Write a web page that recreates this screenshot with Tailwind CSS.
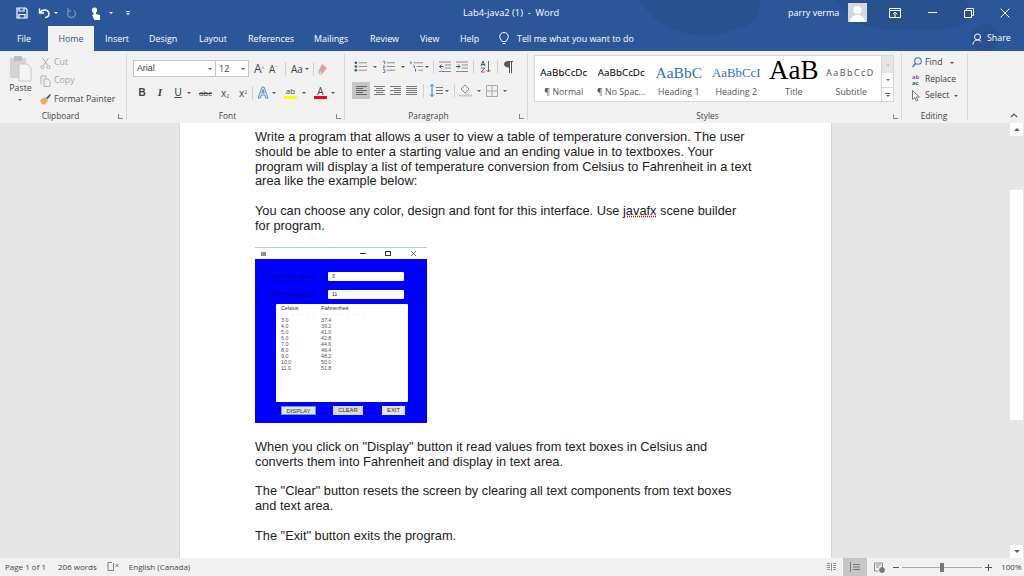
<!doctype html>
<html><head><meta charset="utf-8"><script src="https://cdn.jsdelivr.net/npm/@tailwindcss/browser@4"></script></head>
<body class="m-0">
<div class="w-[1024px] h-[576px] overflow-hidden flex flex-col bg-[#e6e6e6] font-['Open_Sans',sans-serif] text-[#444]">
  <!-- header -->
  <div class="relative w-[1024px] h-[51px] shrink-0 bg-[#2b579a] flex flex-col text-white text-[9px]">
    <svg class="absolute left-[640px] top-0 w-[384px] h-[51px]" viewBox="0 0 384 51" fill="#28528f"><path d="M0 0h120c0 12 -4 24 -20 28 -18 6 -34 12 -50 6C30 30 10 20 0 0Z"/><path d="M195 0h130c10 10 6 24 -12 28 -30 4 -70 6 -100 -6Z"/><circle cx="345" cy="38" r="14"/></svg>
    <div class="h-[26px] flex items-center relative">
      <svg class="ml-[16px] w-[12px] h-[12px]" viewBox="0 0 12 12" fill="none" stroke="#fff" stroke-width="1.2"><path d="M1 1h8.500L11 2.500V11H1Z"/><path d="M3 1v3h5V1M3 11V7.500h6V11"/></svg>
      <svg class="ml-[10px] w-[13px] h-[12px]" viewBox="0 0 13 12" fill="none" stroke="#fff" stroke-width="1.600"><path d="M2 5.500C4 2.500 9 2 10.500 5S10 10.500 7 10.500"/><path d="M1.500 1.500V6H6" stroke-width="1.400"/></svg>
      <span class="ml-[3px] w-0 h-0 border-x-[2px] border-x-transparent border-t-[2px] border-t-white"></span>
      <svg class="ml-[8px] w-[11px] h-[12px]" viewBox="0 0 11 12" fill="none" stroke="#6a8abb" stroke-width="1.500"><path d="M3 3.500A4 4 0 1 0 8 3.500"/><path d="M2 1v3h3"/></svg>
      <svg class="ml-[14px] w-[10px] h-[13px]" viewBox="0 0 10 13" fill="#fff"><circle cx="3.500" cy="3" r="2.600"/><path d="M2 4h3v3l4 1v5H3.500L1 8h1.500Z"/></svg>
      <span class="ml-[8px] w-0 h-0 border-x-[2px] border-x-transparent border-t-[2px] border-t-white"></span>
      <span class="ml-[13px] flex flex-col items-center gap-[1px]"><span class="w-[4px] h-px bg-white"></span><span class="w-0 h-0 border-x-[2px] border-x-transparent border-t-[2px] border-t-white"></span></span>
      <span class="absolute left-[463px] top-[6px] text-[9.300px] leading-[13px]">Lab4-java2 (1)&nbsp; -&nbsp; Word</span>
      <span class="absolute left-[788px] top-[6px] text-[9px] leading-[13px]">parry verma</span>
      <span class="absolute left-[848px] top-[3px] w-[19px] h-[19px] bg-[#d8d8d8] overflow-hidden"><svg viewBox="0 0 19 19" class="w-full h-full" fill="#fff"><circle cx="9.500" cy="7" r="4"/><path d="M2 19c0-5 4-7 7.500-7s7.500 2 7.500 7Z"/></svg></span>
      <svg class="absolute left-[889px] top-[8px] w-[12px] h-[10px]" viewBox="0 0 12 10" fill="none" stroke="#fff"><path d="M.5.500h11v9H.5ZM.5 2.500h11M6 9V4M4 6l2-2 2 2"/></svg>
      <span class="absolute left-[928px] top-[12px] w-[9px] h-px bg-white"></span>
      <svg class="absolute left-[964px] top-[8px] w-[10px] h-[10px]" viewBox="0 0 10 10" fill="none" stroke="#fff"><path d="M.5 2.500h7v7h-7ZM2.500 2.500v-2h7v7h-2"/></svg>
      <svg class="absolute left-[1000px] top-[8px] w-[10px] h-[10px]" viewBox="0 0 10 10" fill="none" stroke="#fff"><path d="M.5.500l9 9M9.500.500l-9 9"/></svg>
    </div>
    <div class="h-[25px] flex items-center relative text-[8.900px]">
      <span class="w-[48px] pl-[17px]">File</span>
      <span class="w-[46px] h-[25px] bg-[#f1f1f1] text-[#2b579a] text-center leading-[25px]">Home</span>
      <span class="ml-[11px] w-[44px]">Insert</span>
      <span class="w-[50px]">Design</span>
      <span class="w-[49px]">Layout</span>
      <span class="w-[66px]">References</span>
      <span class="w-[56px]">Mailings</span>
      <span class="w-[50px]">Review</span>
      <span class="w-[40px]">View</span>
      <span class="w-[39px]">Help</span>
      <svg class="w-[10px] h-[13px]" viewBox="0 0 10 13" fill="none" stroke="#fff"><path d="M3 9.500C2 7.500 .7 6.500 .7 4.500a4.300 4 0 0 1 8.600 0C9.300 6.500 8 7.500 7 9.500ZM3.500 11.500h3"/></svg>
      <span class="ml-[8px]">Tell me what you want to do</span>
      <svg class="absolute left-[972px] top-[7px] w-[11px] h-[12px]" viewBox="0 0 11 12" fill="none" stroke="#fff"><circle cx="5.500" cy="4" r="3"/><path d="M1 11.500c0-3 2-4.500 4.500-4.500 1.500 0 2.500.5 3.500 1.500"/></svg>
      <span class="absolute left-[987px] top-[5px]">Share</span>
    </div>
  </div>
  <!-- ribbon -->
  <div class="h-[72px] bg-[#f1f1f1] flex shrink-0 text-[8.800px] relative">
    <!-- clipboard -->
    <div class="w-[127px] h-[67px] mt-[2px] border-r border-[#d8d8d8] flex flex-col shrink-0">
      <div class="h-[57px] flex">
        <div class="w-[40px] flex flex-col items-center pt-[3px]">
          <svg class="w-[23px] h-[26px]" viewBox="0 0 23 26"><rect x="1" y="2" width="16" height="20" fill="#d4d4d4"/><rect x="5" y="0" width="8" height="5" fill="#bdbdbd"/><path d="M10 8h8l4 4v13H10Z" fill="#f4f4f4" stroke="#c8c8c8"/></svg>
          <span class="leading-[11px] mt-[1px] ml-[1px] text-[#444]">Paste</span>
          <span class="w-0 h-0 mt-[5px] border-x-[2px] border-x-transparent border-t-[2px] border-t-[#666]"></span>
        </div>
        <div class="flex flex-col pt-[1px] text-[#444] gap-[1.500px]">
          <div class="h-[17px] flex items-center gap-[3px] text-[#a6a6a6]"><svg class="w-[11px] h-[12px]" viewBox="0 0 11 12" fill="none" stroke="#b0b0b0"><path d="M2.500 1l5 7M8.500 1l-5 7"/><circle cx="2.500" cy="10" r="1.500"/><circle cx="8.500" cy="10" r="1.500"/></svg>Cut</div>
          <div class="h-[17px] flex items-center gap-[3px] text-[#a6a6a6]"><svg class="w-[11px] h-[12px]" viewBox="0 0 11 12" fill="none" stroke="#b0b0b0"><path d="M1 9V1h5v2M4 4h4l2 2v5.500H4Z"/></svg>Copy</div>
          <div class="h-[17px] flex items-center gap-[3px]"><svg class="w-[11px] h-[11px]" viewBox="0 0 11 11"><path d="M0 6l5-3 3 4-3 3.500H2Z" fill="#e4b060"/><path d="M6 4l4-4 1 1-3.500 4.500Z" fill="#555"/></svg>Format Painter</div>
        </div>
      </div>
      <div class="h-[10px] relative text-center pr-[5px] text-[8.300px] leading-[12px]">Clipboard<span class="absolute right-[3px] top-[4px] w-[5px] h-[5px] border-l border-b border-[#888]"></span></div>
    </div>
    <!-- font -->
    <div class="w-[218px] h-[67px] mt-[2px] border-r border-[#d8d8d8] flex flex-col shrink-0 pl-[6px]">
      <div class="h-[57px] flex flex-col">
        <div class="h-[17px] mt-[7px] flex items-center">
          <div class="w-[83px] h-[17px] bg-white border border-[#c6c6c6] flex items-center justify-between px-[3px] font-['Liberation_Sans',sans-serif] text-[8.800px]">Arial<span class="w-0 h-0 border-x-[2px] border-x-transparent border-t-[2px] border-t-[#555]"></span></div>
          <div class="w-[34px] h-[17px] -ml-px bg-white border border-[#c6c6c6] flex items-center justify-between px-[3px] text-[9px]">12<span class="w-0 h-0 border-x-[2px] border-x-transparent border-t-[2px] border-t-[#555]"></span></div>
          <span class="ml-[5px] text-[12px] leading-none w-[15px]">A<sup class="text-[5px] text-[#2b579a]">^</sup></span>
          <span class="text-[10px] leading-none w-[14px]">A<sup class="text-[5px] text-[#2b579a]">ˇ</sup></span>
          <span class="w-px h-[14px] bg-[#d0d0d0] ml-[2px]"></span>
          <span class="ml-[5px] text-[10px] leading-none">Aa</span><span class="ml-[2px] w-0 h-0 border-x-[2px] border-x-transparent border-t-[2px] border-t-[#555]"></span>
          <span class="w-px h-[14px] bg-[#d0d0d0] ml-[4px]"></span>
          <svg class="ml-[3px] w-[12px] h-[12px]" viewBox="0 0 12 12"><path d="M5 1l5 4-4 5-4-3Z" fill="#e79aa4"/><path d="M2 7l4 3-1 1H2Z" fill="#ddd" stroke="#999" stroke-width=".5"/></svg>
        </div>
        <div class="h-[17px] mt-[7px] flex items-center text-[#444]">
          <span class="w-[18px] text-center font-bold font-['Liberation_Sans',sans-serif] text-[10px]">B</span>
          <span class="w-[18px] text-center italic font-['Liberation_Serif',serif] font-bold text-[11px]">I</span>
          <span class="w-[18px] text-center underline font-['Liberation_Sans',sans-serif] text-[10px]">U</span>
          <span class="w-0 h-0 border-x-[2px] border-x-transparent border-t-[2px] border-t-[#555]"></span>
          <span class="ml-[6px] w-[17px] text-center line-through text-[8px]">abc</span>
          <span class="ml-[4px] w-[14px] text-center text-[10px] leading-none">x<sub class="text-[5px] text-[#2b579a]">2</sub></span>
          <span class="ml-[4px] w-[14px] text-center text-[10px] leading-none">x<sup class="text-[5px] text-[#2b579a]">2</sup></span>
          <span class="w-px h-[14px] bg-[#d0d0d0] ml-[2px]"></span>
          <svg class="ml-[4px] w-[12px] h-[13px]" viewBox="0 0 12 13" fill="#dbe8f7" stroke="#5b8fd0"><path d="M1 12L5 1h2l4 11H8.500L7.700 9H4.300L3.500 12ZM4.800 7h2.400L6 3.500Z"/></svg>
          <span class="ml-[3px] w-0 h-0 border-x-[2px] border-x-transparent border-t-[2px] border-t-[#555]"></span>
          <div class="ml-[8px] w-[13px] flex flex-col items-center text-[8px] leading-[10px]"><span>ab</span><span class="w-[13px] h-[3px] bg-[#ffff00]"></span></div>
          <span class="ml-[5px] w-0 h-0 border-x-[2px] border-x-transparent border-t-[2px] border-t-[#555]"></span>
          <div class="ml-[8px] w-[13px] flex flex-col items-center text-[10px] leading-[10px]"><span>A</span><span class="w-[13px] h-[3px] bg-[#ff0000]"></span></div>
          <span class="ml-[4px] w-0 h-0 border-x-[2px] border-x-transparent border-t-[2px] border-t-[#555]"></span>
        </div>
      </div>
      <div class="h-[10px] relative text-center pr-[22px] text-[8.300px] leading-[12px]">Font<span class="absolute right-[3px] top-[4px] w-[5px] h-[5px] border-l border-b border-[#888]"></span></div>
    </div>
    <!-- paragraph -->
    <div class="w-[183px] h-[67px] mt-[2px] border-r border-[#d8d8d8] flex flex-col shrink-0 pl-[7px]">
      <div class="h-[57px] flex flex-col">
        <div class="h-[17px] mt-[5px] flex items-center">
          <svg class="ml-[2px] w-[13px] h-[13px]" viewBox="0 0 14 13" stroke="#8a8a8a"><path d="M5 2.500h9M5 6.500h9M5 10.500h9"/><g fill="#2b579a" stroke="none"><circle cx="2" cy="2.500" r="1.400"/><circle cx="2" cy="6.500" r="1.400"/><circle cx="2" cy="10.500" r="1.400"/></g></svg>
          <span class="ml-[6px] w-0 h-0 border-x-[2px] border-x-transparent border-t-[2px] border-t-[#555]"></span>
          <svg class="ml-[5px] w-[13px] h-[13px]" viewBox="0 0 14 13" stroke="#8a8a8a"><path d="M5 2.500h9M5 6.500h9M5 10.500h9"/><path d="M1 1h2v3M1 6h2l-2 2h2M1 10h2v3H1" stroke="#2b579a" fill="none" stroke-width=".8"/></svg>
          <span class="ml-[6px] w-0 h-0 border-x-[2px] border-x-transparent border-t-[2px] border-t-[#555]"></span>
          <svg class="ml-[5px] w-[13px] h-[13px]" viewBox="0 0 14 13" stroke="#8a8a8a"><path d="M4 2.500h10M7 6.500h7M9 10.500h5"/><path d="M1 1v3M4 5l1 3M6 9v3" stroke="#2b579a"/></svg>
          <span class="ml-[2px] w-0 h-0 border-x-[2px] border-x-transparent border-t-[2px] border-t-[#555]"></span>
          <span class="w-px h-[14px] bg-[#d0d0d0] ml-[4px]"></span>
          <svg class="ml-[5px] w-[12px] h-[12px]" viewBox="0 0 12 12" stroke="#8a8a8a"><path d="M0 1h12M6 4h6M6 7h6M0 10.500h12"/><path d="M4.500 5.500H.5m2-2l-2 2 2 2" stroke="#2b579a" fill="none"/></svg>
          <svg class="ml-[5px] w-[12px] h-[12px]" viewBox="0 0 12 12" stroke="#8a8a8a"><path d="M0 1h12M6 4h6M6 7h6M0 10.500h12"/><path d="M0 5.500h4m-2-2l2 2-2 2" stroke="#2b579a" fill="none"/></svg>
          <span class="w-px h-[14px] bg-[#d0d0d0] ml-[5px]"></span>
          <svg class="ml-[6px] w-[11px] h-[13px]" viewBox="0 0 11 13" fill="none"><path d="M1 6L3 1l2 5M1.500 4.500h3" stroke="#2b579a"/><path d="M1 8h4L1 12h4" stroke="#8e5ab5"/><path d="M8.500 1v11m-2-2l2 2 2-2" stroke="#666"/></svg>
          <span class="w-px h-[14px] bg-[#d0d0d0] ml-[6px]"></span>
          <svg class="ml-[6px] w-[9px] h-[12px]" viewBox="0 0 9 12" fill="#555"><path d="M4 0h5v1H8v11H7V1H6v11H5V6.500C1.500 6.500 0 5 0 3.200S1.500 0 4 0Z"/></svg>
        </div>
        <div class="h-[17px] mt-[7px] flex items-center">
          <span class="w-[18px] h-[17px] bg-[#c6c6c6] flex items-center justify-center"><svg class="w-[11px] h-[9px]" viewBox="0 0 11 9" stroke="#666"><path d="M0 .5h11M0 2.500h7M0 4.500h11M0 6.500h7M0 8.500h11"/></svg></span>
          <svg class="ml-[4px] w-[11px] h-[9px]" viewBox="0 0 11 9" stroke="#777"><path d="M0 .5h11M2 2.500h7M0 4.500h11M2 6.500h7M0 8.500h11"/></svg>
          <svg class="ml-[5px] w-[11px] h-[9px]" viewBox="0 0 11 9" stroke="#777"><path d="M0 .5h11M4 2.500h7M0 4.500h11M4 6.500h7M0 8.500h11"/></svg>
          <svg class="ml-[5px] w-[11px] h-[9px]" viewBox="0 0 11 9" stroke="#777"><path d="M0 .5h11M0 2.500h11M0 4.500h11M0 6.500h11M0 8.500h11"/></svg>
          <span class="w-px h-[14px] bg-[#d0d0d0] ml-[6px]"></span>
          <svg class="ml-[5px] w-[14px] h-[13px]" viewBox="0 0 14 13" fill="none"><path d="M3 .5v12M1 2.500l2-2 2 2M1 10.500l2 2 2-2" stroke="#2b7cd3"/><path d="M7 3.500h7M7 6.500h7M7 9.500h7" stroke="#777"/></svg>
          <span class="ml-[2px] w-0 h-0 border-x-[2px] border-x-transparent border-t-[2px] border-t-[#555]"></span>
          <span class="w-px h-[14px] bg-[#d0d0d0] ml-[5px]"></span>
          <svg class="ml-[4px] w-[13px] h-[13px]" viewBox="0 0 13 13" fill="none" stroke="#888"><path d="M6 1l4 4-4 4-4-4Z" fill="#f4f4f4"/><path d="M0 11.500h13" stroke="#ccc" stroke-width="2"/></svg>
          <span class="ml-[5px] w-0 h-0 border-x-[2px] border-x-transparent border-t-[2px] border-t-[#555]"></span>
          <svg class="ml-[5px] w-[12px] h-[12px]" viewBox="0 0 12 12" fill="none" stroke="#aaa"><path d="M.5.500h11v11H.5ZM6 .5v11M.5 6h11"/></svg>
          <span class="ml-[5px] w-0 h-0 border-x-[2px] border-x-transparent border-t-[2px] border-t-[#555]"></span>
        </div>
      </div>
      <div class="h-[10px] relative text-center pr-[22px] text-[8.300px] leading-[12px]">Paragraph<span class="absolute right-[3px] top-[4px] w-[5px] h-[5px] border-l border-b border-[#888]"></span></div>
    </div>
    <!-- styles -->
    <div class="w-[374px] h-[67px] mt-[2px] border-r border-[#d8d8d8] flex flex-col shrink-0 pl-[6px]">
      <div class="h-[57px] pt-[2px]">
        <div class="w-[360px] h-[47px] bg-white border border-[#d8d8d8] flex">
          <div class="w-[57.500px] shrink-0 flex flex-col items-center"><span class="h-[30px] leading-[34px] text-[#000] text-[9.800px] font-['Noto_Sans',sans-serif]">AaBbCcDc</span><span class="text-[#555] leading-[12px]">¶ Normal</span></div>
          <div class="w-[57.500px] shrink-0 flex flex-col items-center"><span class="h-[30px] leading-[34px] text-[#000] text-[9.800px] font-['Noto_Sans',sans-serif]">AaBbCcDc</span><span class="text-[#555] leading-[12px] whitespace-nowrap">¶ No Spac...</span></div>
          <div class="w-[57.500px] shrink-0 flex flex-col items-center"><span class="h-[30px] leading-[34px] text-[#2e74b5] text-[15.500px] font-['Liberation_Serif',serif]">AaBbC</span><span class="text-[#555] leading-[12px]">Heading 1</span></div>
          <div class="w-[57.500px] shrink-0 flex flex-col items-center"><span class="h-[30px] leading-[34px] text-[#2e74b5] text-[12.800px] font-['Liberation_Serif',serif]">AaBbCcI</span><span class="text-[#555] leading-[12px]">Heading 2</span></div>
          <div class="w-[57.500px] shrink-0 flex flex-col items-center"><span class="h-[30px] leading-[28px] text-[#000] text-[27px] font-['Liberation_Serif',serif]">AaB</span><span class="text-[#555] leading-[12px]">Title</span></div>
          <div class="w-[57.500px] shrink-0 flex flex-col items-center"><span class="h-[30px] leading-[34px] text-[#5a5a5a] text-[8.800px] tracking-[1.500px] font-['Noto_Sans',sans-serif] whitespace-nowrap overflow-hidden w-[50px]">AaBbCcD</span><span class="text-[#555] leading-[12px]">Subtitle</span></div>
          <div class="w-[12px] ml-auto border-l border-[#d8d8d8] flex flex-col shrink-0">
            <span class="h-[17px] bg-[#e6e6e6] flex items-center justify-center"><span class="w-0 h-0 border-x-[2px] border-x-transparent border-b-[2px] border-b-[#c0c0c0]"></span></span>
            <span class="h-[14px] flex items-center justify-center"><span class="w-0 h-0 border-x-[2px] border-x-transparent border-t-[2px] border-t-[#666]"></span></span>
            <span class="h-[14px] border-t border-[#d8d8d8] flex flex-col items-center justify-center gap-[1px]"><span class="w-[5px] h-px bg-[#666]"></span><span class="w-0 h-0 border-x-[2px] border-x-transparent border-t-[2px] border-t-[#666]"></span></span>
          </div>
        </div>
      </div>
      <div class="h-[10px] relative text-center pr-[20px] text-[8.300px] leading-[12px]">Styles<span class="absolute right-[3px] top-[4px] w-[5px] h-[5px] border-l border-b border-[#888]"></span></div>
    </div>
    <!-- editing -->
    <div class="w-[66px] h-[67px] mt-[2px] border-r border-[#d8d8d8] flex flex-col shrink-0 pl-[10px]">
      <div class="h-[57px] flex flex-col pt-[1px]">
        <div class="h-[17px] flex items-center gap-[3px]"><svg class="w-[10px] h-[11px]" viewBox="0 0 10 11" fill="none" stroke="#2b7cd3" stroke-width="1.100"><circle cx="6" cy="4" r="3.300"/><path d="M3.500 6.500L.5 10" stroke-width="1.500"/></svg><span>Find</span><span class="ml-[4px] w-0 h-0 border-x-[2px] border-x-transparent border-t-[2px] border-t-[#555]"></span></div>
        <div class="h-[17px] flex items-center gap-[2px]"><span class="w-[11px] flex flex-col text-[6px] leading-[6px] font-bold text-[#2b579a]"><span class="text-[#8e5ab5]">ab</span><span>ac</span></span><span class="text-[8.500px]">Replace</span></div>
        <div class="h-[16px] flex items-center gap-[4px]"><svg class="w-[9px] h-[12px]" viewBox="0 0 9 12" fill="#fff" stroke="#777"><path d="M.5.500v9l2.300-2 1.500 3.500 1.500-.7-1.500-3.300h3Z"/></svg><span>Select</span><span class="ml-[1px] w-0 h-0 border-x-[2px] border-x-transparent border-t-[2px] border-t-[#555]"></span></div>
      </div>
      <div class="h-[10px] text-center pr-[11px] text-[8.300px] leading-[12px]">Editing</div>
    </div>
    <svg class="absolute left-[1010px] top-[62px] w-[8px] h-[5px]" viewBox="0 0 8 5" fill="none" stroke="#555" stroke-width="1.200"><path d="M1 4l3-3 3 3"/></svg>
  </div>
  <!-- main -->
  <div class="flex-1 min-h-0 flex relative overflow-hidden">
    <div class="w-[179px] shrink-0"></div>
    <div class="w-[653px] bg-white border-x border-[#d6d6d6] shrink-0 pl-[75px] pt-[7px] font-['Liberation_Sans',sans-serif] text-[12.800px] leading-[14.830px] text-[#222] overflow-hidden">
      <p class="w-[498px] mb-[14.830px]">Write a program that allows a user to view a table of temperature conversion. The user should be able to enter a starting value and an ending value in to textboxes. Your program will display a list of temperature conversion from Celsius to Fahrenheit in a text area like the example below:</p>
      <p class="w-[498px]">You can choose any color, design and font for this interface. Use <span class="underline decoration-dotted decoration-[#d00]">javafx</span> scene builder for program.</p>
      <!-- embedded screenshot -->
      <div class="w-[172px] h-[176px] mt-[13.500px] flex flex-col bg-[#0000ff] text-[5px] leading-[6px]">
        <div class="h-[12px] bg-white border-t border-[#a9cfe8] flex items-center text-black shrink-0">
          <span class="ml-[6px] w-[5px] h-[4px] bg-[#7d9a8a]"></span>
          <span class="ml-[94px] w-[6px] h-px bg-[#333]"></span>
          <span class="ml-[19px] w-[6px] h-[5px] border border-[#333]"></span>
          <svg class="ml-[20px] w-[5px] h-[5px]" viewBox="0 0 5 5" stroke="#333" stroke-width=".7"><path d="M0 0l5 5M5 0l-5 5"/></svg>
        </div>
        <div class="pl-[12px] mt-[13px] flex items-center h-[9px] shrink-0"><span class="w-[61px] text-[#00008c] text-[6.300px]">Enter Start Value</span><span class="w-[76px] h-[9px] bg-white rounded-[1px] pl-[4px] text-[#222] leading-[9px]">3</span></div>
        <div class="pl-[14px] mt-[9px] flex items-center h-[9px] shrink-0"><span class="w-[59px] text-[#00008c] text-[6.300px]">Enter End Value</span><span class="w-[76px] h-[9px] bg-white rounded-[1px] pl-[4px] text-[#222] leading-[9px]">11</span></div>
        <div class="ml-[21px] mt-[5px] w-[132px] h-[98px] bg-white rounded-[1px] flex text-[#555] pl-[5px] pt-[1px] shrink-0 text-[5.300px] leading-[6px]">
          <div class="w-[40px]"><div class="text-[#333]">Celsius</div><div class="h-[6px] leading-[6px] text-[#ccc] tracking-[1px]">- - - - - - -</div><div>3.0</div><div>4.0</div><div>5.0</div><div>6.0</div><div>7.0</div><div>8.0</div><div>9.0</div><div>10.0</div><div>11.0</div></div>
          <div class="w-[60px]"><div class="text-[#333] text-[5.800px]">Fahrenheit</div><div class="h-[6px] leading-[6px] text-[#ccc] tracking-[1px]">- - - - - - - - -</div><div>37.4</div><div>39.2</div><div>41.0</div><div>42.8</div><div>44.6</div><div>46.4</div><div>48.2</div><div>50.0</div><div>51.8</div></div>
        </div>
        <div class="mt-[4px] flex text-[#333] text-[5.800px] text-center leading-[8px]"><span class="ml-[26px] w-[35px] h-[9px] bg-[#e4e4e4] border-[0.5px] border-[#5aa0d8]">DISPLAY</span><span class="ml-[17px] w-[30px] h-[9px] bg-[#d8d8d8]">CLEAR</span><span class="ml-[19px] w-[23px] h-[9px] bg-[#e4e4e4]">EXIT</span></div>
      </div>
      <p class="w-[498px] mt-[16.500px] mb-[14.830px]">When you click on "Display" button it read values from text boxes in Celsius and converts them into Fahrenheit and display in text area.</p>
      <p class="w-[498px] mb-[14.830px]">The "Clear" button resets the screen by clearing all text components from text boxes and text area.</p>
      <p class="w-[498px]">The "Exit" button exits the program.</p>
    </div>
    <div class="flex-1"></div>
    <div class="w-[13px] mr-[1px] flex flex-col justify-between shrink-0 relative">
      <span class="h-[13px] bg-white flex items-center justify-center"><span class="w-0 h-0 border-x-[3px] border-x-transparent border-b-[3px] border-b-[#666]"></span></span>
      <span class="absolute left-0 top-[67px] w-[13px] h-[230px] bg-white"></span>
      <span class="h-[13px] bg-white flex items-center justify-center"><span class="w-0 h-0 border-x-[3px] border-x-transparent border-t-[3px] border-t-[#666]"></span></span>
    </div>
  </div>
  <!-- status bar -->
  <div class="h-[18px] shrink-0 bg-[#f1f1f1] flex items-center text-[8px] text-[#444]">
    <span class="ml-[5px]">Page 1 of 1</span>
    <span class="ml-[12px]">206 words</span>
    <svg class="ml-[10px] w-[12px] h-[10px]" viewBox="0 0 12 10" fill="none" stroke="#666" stroke-width=".8"><path d="M5 .5H1v8h5.500V1"/><path d="M8.500 2l3 3M11.500 2l-3 3"/></svg>
    <span class="ml-[10px]">English (Canada)</span>
    <svg class="ml-[636px] w-[11px] h-[10px]" viewBox="0 0 11 10" fill="none" stroke="#777" stroke-width=".8"><path d="M5.500 1v8M1 1.500h3M1 3.500h3M1 5.500h3M1 7.500h3M7 1.500h3M7 3.500h3M7 5.500h3M7 7.500h3"/></svg>
    <span class="ml-[6px] w-[24px] h-[18px] bg-[#c6c6c6] flex items-center justify-center"><svg class="w-[10px] h-[10px]" viewBox="0 0 10 10" fill="none" stroke="#666" stroke-width=".8"><path d="M.5 0v10M3 2.500h7M3 5h7M3 7.500h7"/></svg></span>
    <svg class="ml-[7px] w-[11px] h-[11px]" viewBox="0 0 11 11" fill="none" stroke="#777" stroke-width=".8"><path d="M.5 1h8v6M2 3h5M2 5h3M.5 1v8h4"/><circle cx="8" cy="8" r="2.500" fill="#777"/></svg>
    <span class="ml-[8px] w-[6px] h-px bg-[#555]"></span>
    <span class="ml-[3px] w-[80px] h-px bg-[#aaa] relative"><span class="absolute left-[38px] -top-[4px] w-[4px] h-[9px] bg-[#777]"></span></span>
    <svg class="ml-[3px] w-[7px] h-[7px]" viewBox="0 0 7 7" stroke="#555"><path d="M0 3.500h7M3.500 0v7"/></svg>
    <span class="ml-[9px]">100%</span>
  </div>
</div>
</body></html>
